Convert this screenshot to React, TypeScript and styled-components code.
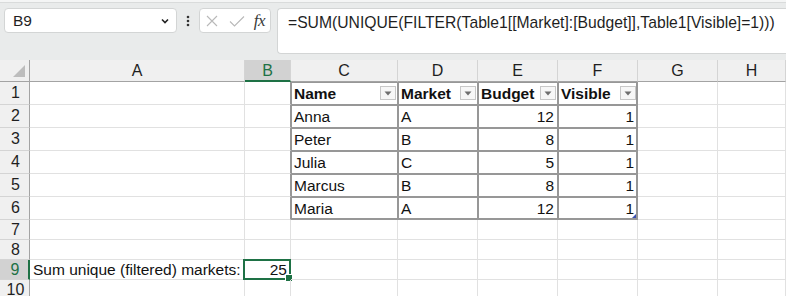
import styled, { createGlobalStyle } from "styled-components";

const GlobalStyle = createGlobalStyle`
  html, body {
    margin: 0;
    padding: 0;
    background: #ffffff;
    font-family: "Liberation Sans", Arial, sans-serif;
    overflow: hidden;
  }
`;

const GREEN = "#1e7145";
const TABLE_LINE = "#979797";
const GRID_LINE = "#e1e1e1";

const Sheet = styled.div`
  width: 786px;
  height: 296px;
  display: flex;
  flex-direction: column;
  overflow: hidden;
`;

const Toolbar = styled.div`
  height: 60px;
  flex: none;
  background: #e9ebeb;
  border-top: 2px solid #f4f5f5;
  box-sizing: border-box;
  display: flex;
  align-items: flex-start;
  padding: 6px 0 0 4px;
  position: relative;

  &::before {
    content: "";
    position: absolute;
    left: 0;
    right: 0;
    top: 0;
    height: 1px;
    background: #d9dbdb;
  }
`;

const NameBox = styled.div`
  width: 173px;
  height: 25px;
  box-sizing: border-box;
  background: #fff;
  border: 1px solid #d3d5d5;
  border-radius: 4px;
  display: flex;
  align-items: center;
  justify-content: space-between;
  padding: 0 6px 0 8px;
  font-size: 15.5px;
  color: #1f1f1f;
`;

const Kebab = styled.div`
  width: 22px;
  height: 25px;
  display: flex;
  align-items: center;
  justify-content: center;
`;

const ActionBox = styled.div`
  width: 72px;
  height: 25px;
  box-sizing: border-box;
  background: #fff;
  border: 1px solid #d3d5d5;
  border-radius: 4px;
  display: flex;
  align-items: center;
  justify-content: space-between;
  padding: 0 5px 0 4px;
`;

const Fx = styled.span`
  font-family: "Liberation Serif", "Times New Roman", serif;
  font-style: italic;
  font-size: 17px;
  color: #3a3a3a;
  letter-spacing: -0.5px;
`;

const FormulaBox = styled.div`
  flex: 1;
  margin-left: 6px;
  height: 46px;
  box-sizing: border-box;
  background: #fff;
  border: 1px solid #d3d5d5;
  border-right: none;
  border-radius: 4px 0 0 4px;
  padding: 4px 0 0 10px;
  font-size: 15.7px;
  line-height: 20px;
  color: #1f1f1f;
  white-space: nowrap;
`;

const Grid = styled.div`
  display: grid;
  grid-template-columns: 30px 215px 46px 107px 80px 80px 80px 80px 1fr;
  grid-template-rows: 22px repeat(6, 23px) repeat(4, 20px);
  font-size: 15.5px;
  color: #111;
`;

const ColHead = styled.div<{ $selected?: boolean }>`
  background: ${(p) => (p.$selected ? "#d2d2d2" : "#f0f0f0")};
  color: ${(p) => (p.$selected ? GREEN : "#1f1f1f")};
  border-right: 1px solid #d4d4d4;
  border-bottom: ${(p) => (p.$selected ? `2px solid ${GREEN}` : "1px solid #a3a3a3")};
  box-sizing: border-box;
  display: flex;
  align-items: center;
  justify-content: center;
  padding-top: 1px;
  font-size: 16px;
`;

const Corner = styled.div`
  background: #f0f0f0;
  border-right: 1px solid #a3a3a3;
  border-bottom: 1px solid #a3a3a3;
  box-sizing: border-box;
  display: flex;
  align-items: flex-end;
  justify-content: flex-end;
  padding: 0 4px 4px 0;
`;

const RowHead = styled.div<{ $selected?: boolean }>`
  background: ${(p) => (p.$selected ? "#d2d2d2" : "#f0f0f0")};
  color: ${(p) => (p.$selected ? GREEN : "#1f1f1f")};
  border-right: ${(p) => (p.$selected ? `2px solid ${GREEN}` : "1px solid #a3a3a3")};
  border-bottom: 1px solid #d4d4d4;
  box-sizing: border-box;
  display: flex;
  align-items: center;
  justify-content: center;
  padding-left: 2px;
  font-size: 16px;
`;

const Cell = styled.div<{
  $align: "left" | "right";
  $bold?: boolean;
  $darkRight?: boolean;
  $darkBottom?: boolean;
  $shadow?: string;
}>`
  position: relative;
  box-sizing: border-box;
  border-right: 1px solid ${(p) => (p.$darkRight ? TABLE_LINE : GRID_LINE)};
  border-bottom: 1px solid ${(p) => (p.$darkBottom ? TABLE_LINE : GRID_LINE)};
  box-shadow: ${(p) => p.$shadow || "none"};
  display: flex;
  align-items: center;
  justify-content: ${(p) => (p.$align === "right" ? "flex-end" : "flex-start")};
  padding: 1px 3px 0 3px;
  font-weight: ${(p) => (p.$bold ? 700 : 400)};
  white-space: nowrap;
  overflow: visible;
`;

const FilterButton = styled.div`
  position: absolute;
  right: 1px;
  top: 4px;
  width: 16px;
  height: 14px;
  box-sizing: border-box;
  border: 1px solid #c8c8c8;
  background: #f7f7f7;
  display: flex;
  align-items: center;
  justify-content: center;
`;

const Selection = styled.div`
  position: absolute;
  left: -2px;
  top: -1px;
  right: -1px;
  bottom: -1px;
  border: 2px solid ${GREEN};
  pointer-events: none;
`;

const FillHandle = styled.div`
  position: absolute;
  right: -4px;
  bottom: -4px;
  width: 6px;
  height: 6px;
  background: ${GREEN};
  border: 1px solid #fff;
`;

const ResizeMark = styled.div`
  position: absolute;
  right: 1px;
  bottom: 1px;
  width: 0;
  height: 0;
  border-left: 4px solid transparent;
  border-bottom: 4px solid #3a50b0;
`;

const COLS = ["A", "B", "C", "D", "E", "F", "G", "H"];

type CellData = { text: string; align: "left" | "right" };

const tableRows: CellData[][] = [
  [
    { text: "Name", align: "left" },
    { text: "Market", align: "left" },
    { text: "Budget", align: "left" },
    { text: "Visible", align: "left" },
  ],
  ...[
    ["Anna", "A", "12", "1"],
    ["Peter", "B", "8", "1"],
    ["Julia", "C", "5", "1"],
    ["Marcus", "B", "8", "1"],
    ["Maria", "A", "12", "1"],
  ].map((r) => [
    { text: r[0], align: "left" as const },
    { text: r[1], align: "left" as const },
    { text: r[2], align: "right" as const },
    { text: r[3], align: "right" as const },
  ]),
];

function Chevron() {
  return (
    <svg width="10" height="8" viewBox="0 0 10 8">
      <path d="M2 2.5 L5 5.5 L8 2.5" fill="none" stroke="#222" strokeWidth="1.6" />
    </svg>
  );
}

function Dots() {
  return (
    <svg width="4" height="12" viewBox="0 0 4 12">
      <circle cx="2" cy="2" r="1.3" fill="#333" />
      <circle cx="2" cy="6" r="1.3" fill="#333" />
      <circle cx="2" cy="10" r="1.3" fill="#333" />
    </svg>
  );
}

function Cross() {
  return (
    <svg width="16" height="16" viewBox="0 0 16 16">
      <path d="M3 3 L13 13 M13 3 L3 13" stroke="#b9b9b9" strokeWidth="1.1" />
    </svg>
  );
}

function Check() {
  return (
    <svg width="18" height="16" viewBox="0 0 18 16">
      <path d="M2 8.5 L6.5 13 L16 3.5" fill="none" stroke="#b9b9b9" strokeWidth="1.1" />
    </svg>
  );
}

function CornerTriangle() {
  return (
    <svg width="12" height="12" viewBox="0 0 12 12">
      <path d="M12 0 L12 12 L0 12 Z" fill="#bdbdbd" />
    </svg>
  );
}

function FilterArrow() {
  return (
    <svg width="8" height="5" viewBox="0 0 8 5">
      <path d="M0.5 0.5 L7.5 0.5 L4 4.5 Z" fill="#6f6f6f" />
    </svg>
  );
}

function BodyCell({ row, col }: { row: number; col: number }) {
  // table sits in C1:F6 -> col 2..5, row 1..6
  const inTable = row >= 1 && row <= 6 && col >= 2 && col <= 5;
  const data = inTable ? tableRows[row - 1][col - 2] : null;
  const shadows: string[] = [];
  if (inTable) {
    shadows.push(`inset 1px 0 0 ${TABLE_LINE}`);
    shadows.push(`inset 0 1px 0 ${TABLE_LINE}`);
    if (col === 5) shadows.push(`inset -1px 0 0 ${TABLE_LINE}`);
    if (row === 6) shadows.push(`inset 0 -1px 0 ${TABLE_LINE}`);
  }
  const darkRight = inTable || (col === 1 && row >= 1 && row <= 6);
  const darkBottom = inTable;

  let text = data?.text ?? "";
  let align: "left" | "right" = data?.align ?? "left";
  if (row === 9 && col === 0) text = "Sum unique (filtered) markets:";
  if (row === 9 && col === 1) {
    text = "25";
    align = "right";
  }

  return (
    <Cell
      $align={align}
      $bold={inTable && row === 1}
      $darkRight={darkRight}
      $darkBottom={darkBottom}
      $shadow={shadows.length ? shadows.join(", ") : undefined}
    >
      {text}
      {inTable && row === 1 && (
        <FilterButton>
          <FilterArrow />
        </FilterButton>
      )}
      {inTable && row === 6 && col === 5 && <ResizeMark />}
      {row === 9 && col === 1 && (
        <Selection>
          <FillHandle />
        </Selection>
      )}
    </Cell>
  );
}

export default function App() {
  const rowNums = Array.from({ length: 10 }, (_, i) => i + 1);
  return (
    <Sheet>
      <GlobalStyle />
      <Toolbar>
        <NameBox>
          <span>B9</span>
          <Chevron />
        </NameBox>
        <Kebab>
          <Dots />
        </Kebab>
        <ActionBox>
          <Cross />
          <Check />
          <Fx>fx</Fx>
        </ActionBox>
        <FormulaBox>
          =SUM(UNIQUE(FILTER(Table1[[Market]:[Budget]],Table1[Visible]=1)))
        </FormulaBox>
      </Toolbar>
      <Grid>
        <Corner>
          <CornerTriangle />
        </Corner>
        {COLS.map((c) => (
          <ColHead key={c} $selected={c === "B"}>
            {c}
          </ColHead>
        ))}
        {rowNums.map((r) => [
          <RowHead key={`h${r}`} $selected={r === 9}>
            {r}
          </RowHead>,
          ...COLS.map((c, ci) => <BodyCell key={`${c}${r}`} row={r} col={ci} />),
        ])}
      </Grid>
    </Sheet>
  );
}
